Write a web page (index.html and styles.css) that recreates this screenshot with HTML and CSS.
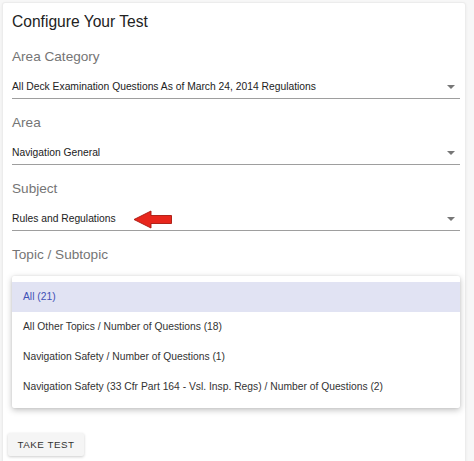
FILE: index.html
```html
<!DOCTYPE html>
<html>
<head>
<meta charset="utf-8">
<link rel="stylesheet" href="styles.css">
</head>
<body>
<div class="card">
  <h1 class="title">Configure Your Test</h1>

  <div class="field">
    <div class="label">Area Category</div>
    <div class="select"><span class="value">All Deck Examination Questions As of March 24, 2014 Regulations</span><span class="caret"></span></div>
  </div>

  <div class="field">
    <div class="label">Area</div>
    <div class="select"><span class="value">Navigation General</span><span class="caret"></span></div>
  </div>

  <div class="field">
    <div class="label">Subject</div>
    <div class="select">
      <span class="value">Rules and Regulations</span>
      <svg class="pointer" width="40" height="19" viewBox="0 0 40 19">
        <path d="M1 9.5 L18 1 L18 5.5 L38.5 5.5 L38.5 13.5 L18 13.5 L18 18 Z" fill="#e8261c" stroke="#a8170f" stroke-width="0.9" stroke-linejoin="round"/>
      </svg>
      <span class="caret"></span>
    </div>
  </div>

  <div class="field topic">
    <div class="label">Topic / Subtopic</div>
    <ul class="menu">
      <li class="item active">All (21)</li>
      <li class="item">All Other Topics / Number of Questions (18)</li>
      <li class="item">Navigation Safety / Number of Questions (1)</li>
      <li class="item">Navigation Safety (33 Cfr Part 164 - Vsl. Insp. Regs) / Number of Questions (2)</li>
    </ul>
  </div>

  <button class="btn">TAKE TEST</button>
</div>
</body>
</html>
```

FILE: styles.css
```css
html, body {
  margin: 0;
  padding: 0;
  background: #f7f7f7;
  font-family: "Liberation Sans", Arial, sans-serif;
}

.card {
  margin: 2px 0 0 2px;
  width: 464px;
  height: 470px;
  box-sizing: border-box;
  background: #fff;
  border: 1px solid #ececec;
  border-radius: 3px;
  box-shadow: 0 1px 3px rgba(0,0,0,0.06);
  padding: 7px 5px 0 9px;
}

.title {
  margin: 0 0 11px 0;
  font-size: 15.6px;
  font-weight: normal;
  line-height: 24px;
  color: #222;
}

.field {
  margin-bottom: 12px;
}

.label {
  font-size: 13.6px;
  line-height: 24px;
  height: 24px;
  color: #757575;
}

.select {
  display: flex;
  align-items: center;
  height: 30px;
  box-sizing: border-box;
  padding: 9px 0 2px 0;
  border-bottom: 1px solid #9e9e9e;
  font-size: 10.3px;
  color: #222;
  position: relative;
}

.value {
  line-height: 18px;
}

.pointer {
  margin-left: 17px;
  margin-top: 1px;
}

.caret {
  margin-left: auto;
  margin-right: 5px;
  width: 0;
  height: 0;
  border-left: 4px solid transparent;
  border-right: 4px solid transparent;
  border-top: 4px solid #777;
}

.topic {
  margin-bottom: 0;
}

.menu {
  list-style: none;
  margin: 9px 0 0 0;
  padding: 6px 0;
  background: #fff;
  box-shadow: 0 2px 6px rgba(0,0,0,0.25), 0 0 2px rgba(0,0,0,0.08);
  border-radius: 2px;
}

.item {
  height: 30px;
  line-height: 30px;
  padding-left: 11px;
  font-size: 10.3px;
  color: #333;
}

.item.active {
  background: #e1e3f3;
  color: #3f51b5;
}

.btn {
  display: block;
  margin: 25px 0 0 -4px;
  width: 76px;
  height: 23px;
  padding: 0;
  border: none;
  border-radius: 2px;
  background: #f5f5f5;
  box-shadow: 0 1px 3px rgba(0,0,0,0.2);
  font-family: "Liberation Sans", Arial, sans-serif;
  font-size: 9.8px;
  letter-spacing: 0.5px;
  color: #333;
}
```
